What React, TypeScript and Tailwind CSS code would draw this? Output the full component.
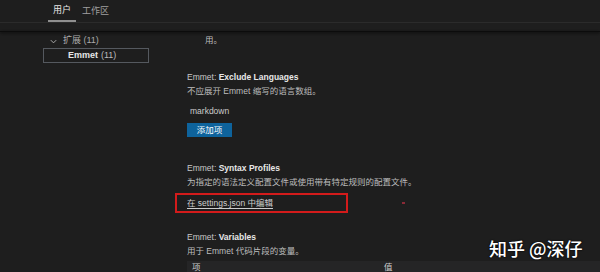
import React from 'react';

const font = { fontFamily: '"Liberation Sans", "Noto Sans CJK SC", sans-serif' };

function Heading({ title }: { title: string }) {
  return (
    <div className="h-[14px] leading-[14px] text-[8.5px] text-[#c8c8c8]">
      Emmet: <span className="font-bold text-[#e8e8e8]">{title}</span>
    </div>
  );
}

function Desc({ children }: { children: React.ReactNode }) {
  return <div className="h-[14px] leading-[14px] text-[8.5px] text-[#bdbdbd]">{children}</div>;
}

export default function App() {
  return (
    <div className="relative w-[600px] h-[272px] overflow-hidden bg-[#1e1e1e] text-[#cccccc]" style={font}>
      {/* header tabs */}
      <div className="h-[32px] flex flex-col">
        <div className="flex h-[23px] items-end border-b border-[#2b2b2b]">
          <div className="ml-[48px] w-[28px] h-[20px] flex items-center justify-center border-b-2 border-[#8f8f8f] text-[9px] text-[#e6e6e6]">
            用户
          </div>
          <div className="ml-[6px] h-[20px] flex items-center text-[9px] text-[#a0a0a0]">工作区</div>
        </div>
        <div className="flex-1" />
        <div className="h-px bg-[#0c0c0c] shadow-[0_1px_3px_#000]" />
      </div>

      <div className="flex">
        {/* sidebar */}
        <div className="w-[175px] pl-[43px] pt-[2px]">
          <div className="h-[14px] flex items-center text-[9px] text-[#aaaaaa]">
            <svg width="9" height="9" viewBox="0 0 10 10" className="ml-[6px] mr-[5px]">
              <path d="M2 3.5 L5 6.5 L8 3.5" fill="none" stroke="#aaaaaa" strokeWidth="1.1" />
            </svg>
            扩展 (11)
          </div>
          <div className="w-[106px] h-[15px] border border-[#55595f] flex items-center pl-[24px] text-[9px]">
            <span className="font-bold text-[#e6e6e6]">Emmet</span>
            <span className="ml-[3px] text-[#bbbbbb]">(11)</span>
          </div>
        </div>

        {/* content */}
        <div className="flex-1 pl-[12px] pt-px">
          <div className="pl-[18px] h-[14px] leading-[14px] text-[8.5px] text-[#bdbdbd]">用。</div>

          <div className="mt-[23px]">
            <Heading title="Exclude Languages" />
            <Desc>不应展开 Emmet 缩写的语言数组。</Desc>
          </div>
          <div className="mt-[6px] pl-[3px] h-[14px] leading-[14px] text-[8.5px] text-[#cccccc]">markdown</div>
          <div className="mt-[5px] w-[45px] h-[14px] bg-[#0e639c] flex items-center justify-center text-[8.5px] text-white">
            添加项
          </div>

          <div className="mt-[24px]">
            <Heading title="Syntax Profiles" />
            <Desc>为指定的语法定义配置文件或使用带有特定规则的配置文件。</Desc>
          </div>
          <div className="relative mt-[7px] h-[14px] leading-[14px] text-[8.5px] text-[#cccccc]">
            <span className="underline underline-offset-2">在 settings.json 中编辑</span>
            <span className="absolute left-[-12px] top-[-3px] w-[173px] h-[20px] border-2 border-[#d31b1b]" />
            <span className="absolute left-[215px] top-[6px] w-[3px] h-[2px] bg-[#8a2a36]" />
          </div>

          <div className="mt-[20px]">
            <Heading title="Variables" />
            <Desc>用于 Emmet 代码片段的变量。</Desc>
          </div>
          <div className="mt-[3px] h-[12px] flex items-start bg-[#252526] text-[8.5px] leading-[12px] text-[#cccccc]">
            <span className="pl-[5px] w-[197px]">项</span>
            <span>值</span>
          </div>
        </div>
      </div>

      {/* watermark */}
      <div
        className="absolute left-[489px] top-[236px] text-[18px] leading-[24px] font-medium text-white"
        style={{ fontFamily: '"Noto Sans CJK SC", sans-serif', textShadow: '0 0 2px #000, 0 0 1px #000' }}
      >
        知乎 @深仔
      </div>
    </div>
  );
}
